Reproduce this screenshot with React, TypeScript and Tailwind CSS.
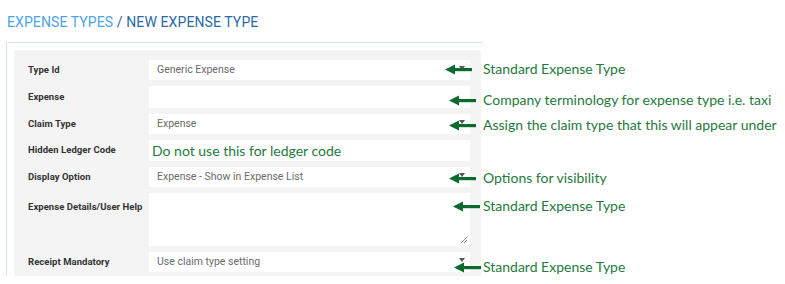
import React from "react";

const NOTE_FONT = "Lato, 'Open Sans', sans-serif";

function Arrow({ w = 28 }: { w?: number }) {
  return (
    <svg width={w} height="11" viewBox={`0 0 ${w} 11`} className="block shrink-0">
      <polygon points={`0,5.5 10,0.5 10,10.5`} fill="#0b6b2e" />
      <rect x="9" y="4" width={w - 9} height="3.2" fill="#0b6b2e" />
    </svg>
  );
}

function Note({ text, left, arrowW = 27, gap = 10, dy = 0 }: { text: string; left: number; arrowW?: number; gap?: number; dy?: number }) {
  return (
    <div
      className="absolute top-0 h-full flex items-center whitespace-nowrap"
      style={{ left, transform: `translateY(${dy}px)` }}
    >
      <Arrow w={arrowW} />
      <span
        className="text-[14px] leading-none text-[#1f7a3d]"
        style={{ marginLeft: gap, fontFamily: NOTE_FONT }}
      >
        {text}
      </span>
    </div>
  );
}

function Caret() {
  return (
    <span className="absolute right-[5px] top-1/2 -translate-y-[4px] w-0 h-0 border-l-[3px] border-r-[3px] border-t-[4px] border-l-transparent border-r-transparent border-t-[#555]" />
  );
}

function Row({
  label,
  h,
  value,
  select,
  textarea,
  note,
  labelTop,
}: {
  label: string;
  h: number;
  value?: string;
  select?: boolean;
  textarea?: boolean;
  note?: React.ReactNode;
  labelTop?: number;
}) {
  return (
    <div className="relative flex" style={{ height: h }}>
      <div
        className={`w-[121px] shrink-0 text-[9.5px] font-bold tracking-[0.05px] text-[#333] whitespace-nowrap flex ${labelTop !== undefined ? "items-start" : "items-center"}`}
        style={labelTop !== undefined ? { paddingTop: labelTop } : undefined}
      >
        {label}
      </div>
      <div className="relative w-[321px] h-full bg-white flex items-center pl-[8px] text-[10.5px] text-[#6b6b6b]">
        {value}
        {select && <Caret />}
        {textarea && (
          <svg className="absolute right-[3px] bottom-[3px]" width="7" height="7" viewBox="0 0 7 7">
            <line x1="1" y1="7" x2="7" y2="1" stroke="#999" strokeWidth="1" />
            <line x1="4" y1="7" x2="7" y2="4" stroke="#999" strokeWidth="1" />
          </svg>
        )}
      </div>
      {note}
    </div>
  );
}

export default function App() {
  return (
    <div className="w-[785px] h-[284px] bg-white overflow-hidden" style={{ fontFamily: "Roboto, sans-serif" }}>
      <div className="pl-[7px] pt-[14px] h-[42px] text-[14px] leading-[16px] tracking-[0.1px]">
        <span className="text-[#4ea3ea]">EXPENSE TYPES</span>
        <span className="text-[#2c6aa6]"> / NEW EXPENSE TYPE</span>
      </div>
      <div className="ml-[6px] w-[477px] border-l border-t border-[#cfe7f8] pl-[7px] pt-[7px]">
        <div className="w-[467px] bg-[#f4f4f4] pl-[14px] pt-[10px] pb-[4px] flex flex-col gap-[6px]">
          <Row label="Type Id" h={20} value="Generic Expense" select note={<Note text="Standard Expense Type" left={417} gap={11} dy={-1} />} />
          <Row label="Expense" h={22} note={<Note text="Company terminology for expense type i.e. taxi" left={421} gap={7} dy={3} />} />
          <Row label="Claim Type" h={20} value="Expense" select note={<Note text="Assign the claim type that this will appear under" left={421} gap={7} dy={1} />} />
          <Row
            label="Hidden Ledger Code"
            h={21}
            value=""
            note={
              <span
                className="absolute left-[124px] top-[4px] text-[14px] leading-none text-[#1f7a3d]"
                style={{ fontFamily: NOTE_FONT }}
              >
                Do not use this for ledger code
              </span>
            }
          />
          <Row label="Display Option" h={20} value="Expense - Show in Expense List" select note={<Note text="Options for visibility" left={421} gap={7} dy={1} />} />
          <Row
            label="Expense Details/User Help"
            h={53}
            textarea
            labelTop={7}
            note={
              <div className="absolute left-0 top-[8px] h-[10px]">
                <Note text="Standard Expense Type" left={425} gap={3} />
              </div>
            }
          />
          <Row label="Receipt Mandatory" h={20} value="Use claim type setting" select note={<Note text="Standard Expense Type" left={426} gap={2} dy={5} />} />
        </div>
      </div>
    </div>
  );
}
